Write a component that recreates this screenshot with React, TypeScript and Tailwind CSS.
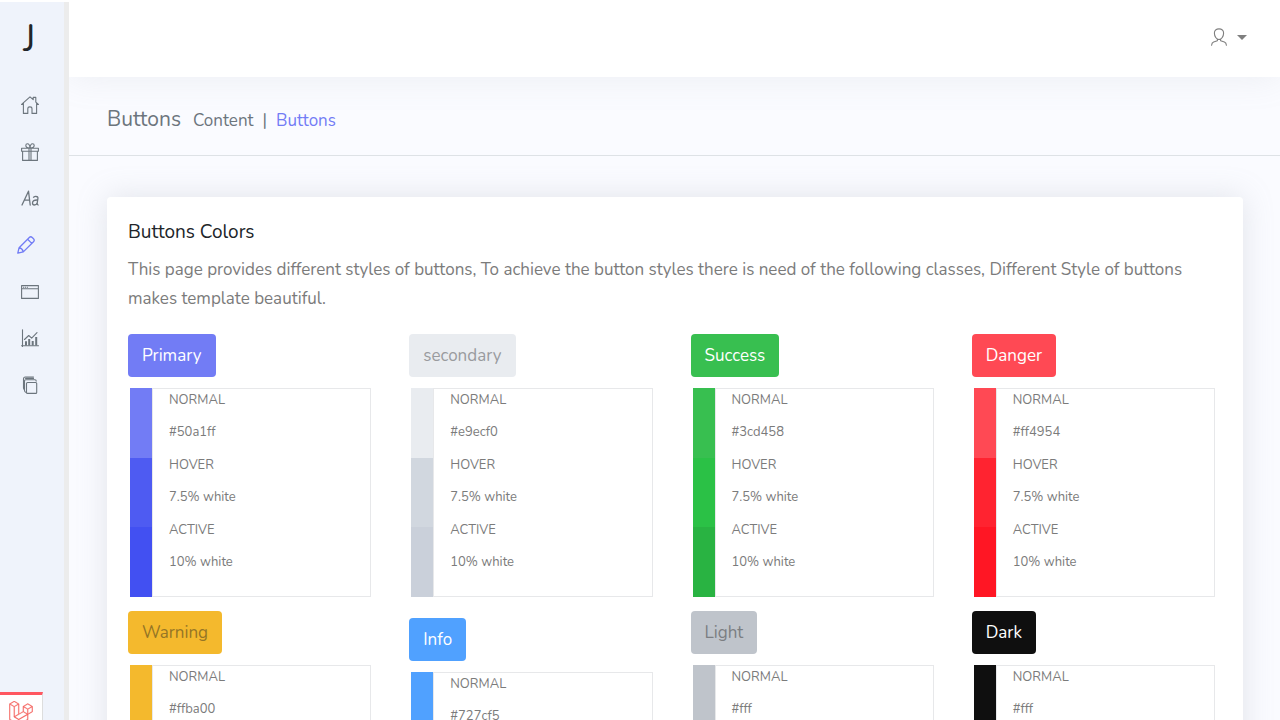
import type { ReactNode } from 'react';
import { SiLaravel } from 'react-icons/si';

type Swatch = {
  label: string;
  code: string;
  button: string;
  tones: [string, string, string];
  column?: string;
};

const swatches: Swatch[] = [
  { label: 'Primary', code: '#50a1ff', button: 'bg-[#727cf5] text-white', tones: ['bg-[#727cf5]', 'bg-[#4e5bf2]', 'bg-[#4250f2]'] },
  { label: 'secondary', code: '#e9ecf0', button: 'bg-[#e9ecf0] text-[#999b9e]', tones: ['bg-[#e9ecf0]', 'bg-[#d1d7df]', 'bg-[#cad0da]'] },
  { label: 'Success', code: '#3cd458', button: 'bg-[#38bf50] text-white', tones: ['bg-[#38bf50]', 'bg-[#2bc146]', 'bg-[#29b342]'] },
  { label: 'Danger', code: '#ff4954', button: 'bg-[#ff4954] text-white', tones: ['bg-[#ff4954]', 'bg-[#ff2330]', 'bg-[#ff1624]'] },
  { label: 'Warning', code: '#ffba00', button: 'bg-[#f4b92d] text-[#957526]', tones: ['bg-[#f4b92d]', 'bg-[#eaa90e]', 'bg-[#dea00d]'] },
  { label: 'Info', code: '#727cf5', button: 'bg-[#50a1ff] text-white', tones: ['bg-[#50a1ff]', 'bg-[#2a8cff]', 'bg-[#1d85ff]'], column: 'pt-[7px]' },
  { label: 'Light', code: '#fff', button: 'bg-[#bfc4cb] text-[#7b7e82]', tones: ['bg-[#bfc4cb]', 'bg-[#aab0b9]', 'bg-[#a3aab4]'] },
  { label: 'Dark', code: '#fff', button: 'bg-[#0f0f0f] text-white', tones: ['bg-[#0f0f0f]', 'bg-[#050505]', 'bg-black'] },
];

function Icon({ children }: { children: ReactNode }) {
  return (
    <svg viewBox="0 0 18 18" className="size-[18px]" fill="none" stroke="currentColor" strokeWidth="1.1" strokeLinecap="round" strokeLinejoin="round" aria-hidden="true">
      {children}
    </svg>
  );
}

const navItems: { name: string; active?: boolean; icon: ReactNode }[] = [
  {
    name: 'Home',
    icon: <path d="M.6 8.400 9 .8l3.200 2.900V1.400h2.600v4.700l2.600 2.300M2.400 7v10.400h4.400v-4.600c0-1.200.9-1.900 2.100-1.900s2.100.7 2.100 1.900v4.600h4.600V7M.6 8.400h1.800M15.600 8.400h1.800" />,
  },
  {
    name: 'Gifts',
    icon: <path d="M.6 5.300h16.800v3H.6zM1.600 8.300v9.100h14.800V8.300M8 5.300v12.100M10 5.300v12.100M9 5.200C6.500 4.900 4.800 4 4.800 2.500 4.800 1.400 5.500.8 6.500.8 7.900.8 8.800 2.700 9 5.200 9.200 2.700 10.100.8 11.500.8c1 0 1.700.6 1.700 1.700 0 1.500-1.700 2.400-4.200 2.700" />,
  },
  {
    name: 'Typography',
    icon: <path strokeWidth="1.300" d="M1 16 7.500 2.200 9.200 16M3.600 11.200h5M12.500 8.200c1-.7 2-.9 2.900-.7 1.200.2 1.700 1 1.500 2.200L16.200 14c-.1 1.100.1 1.700.9 2M16.500 11c-3.200-.2-5 .9-5 3 0 1.300.7 2 1.800 2 1.400 0 2.500-.9 3-2.400" />,
  },
  {
    name: 'Buttons',
    active: true,
    icon: <path strokeWidth="1.300" d="m.8 17.200 1.300-5.500L12.300 1.500c.9-.9 2-.9 2.900 0l1.300 1.300c.9.900.9 2 0 2.900L6.300 15.900zM2.100 11.700c1.700.3 3.700 2.300 4.200 4.200M10.600 3.200l4.200 4.200" />,
  },
  {
    name: 'Windows',
    icon: <path d="M.6 2.600h16.800v12.800H.6zM.6 5.800h16.800M2.500 4.200h.2M4.400 4.200h.2M6.300 4.200h.2" />,
  },
  {
    name: 'Charts',
    icon: (
      <>
        <path d="M1.500.7v16.700M.5 16.800h17M3.500 10.500l4.200-4 3 2.700 5.300-5.500" />
        <path d="M5 16.500v-4.300M8.200 16.500V10M11.700 16.500v-4.500M15.200 16.500V8" strokeWidth="2" strokeLinecap="butt" />
      </>
    ),
  },
  {
    name: 'Pages',
    icon: (
      <>
        <path d="M6.500 6.500h8.200c.6 0 1 .4 1 1v8.900c0 .6-.4 1-1 1H6.500c-.6 0-1-.4-1-1V7.500c0-.6.4-1 1-1z" />
        <path d="M5.200 16.500c-.9-.3-1.700-.9-1.700-2.100V4.900c0-.7.5-1.100 1.200-1.100h9.300c.8 0 1.200.5 1.200 1.300M3.500 13.700c-.7-.4-1-.9-1-1.700V3c0-1.300.7-2 1.900-2h8.100M4.600 2.400h7.900" />
      </>
    ),
  },
];

function Sidebar() {
  return (
    <aside className="sticky top-0 z-10 h-screen w-[69px] shrink-0 border-t-2 border-white">
      <div className="flex h-full flex-col items-start border-r-[5px] border-[#ececec] bg-[#eff3fb]">
        <a href="#top" className="flex h-[74px] w-[59px] items-center justify-center text-[38px] leading-none text-[#212529]">J</a>
        <nav aria-label="Main" className="mt-5 flex h-[298px] w-[60px] flex-col items-center justify-between text-[#6c757d]">
          {navItems.map((item) => (
            <a key={item.name} href={`#${item.name.toLowerCase()}`} aria-label={item.name} className={item.active ? 'pr-2 text-[#727cf5]' : ''}>
              <Icon>{item.icon}</Icon>
            </a>
          ))}
        </nav>
      </div>
    </aside>
  );
}

function Header() {
  return (
    <header className="relative flex h-[77px] items-center justify-end bg-white pr-[33px] pb-[3px] shadow-[0_0_35px_0_rgba(154,161,171,0.15)]">
      <button type="button" aria-label="Account" className="flex items-center gap-[9px] text-[#7f7f7f]">
        <Icon>
          <path d="M9 .9c2.700 0 4.600 1.500 4.600 4.200 0 3.200-2 6.400-4.600 6.400S4.400 8.300 4.400 5.100C4.400 2.400 6.300.9 9 .9zM7.400 11.300v1.500L3.600 14c-1.300.5-1.900 1.700-2 3.300M10.600 11.300v1.500l3.800 1.200c1.300.5 1.900 1.700 2 3.300" />
        </Icon>
        <svg viewBox="0 0 10 5" className="h-[5px] w-2.5" fill="currentColor" aria-hidden="true">
          <path d="M0 0h10L5 5z" />
        </svg>
      </button>
    </header>
  );
}

function SwatchCard({ label, code, button, tones, column = '' }: Swatch) {
  const lines = ['NORMAL', code, 'HOVER', '7.5% white', 'ACTIVE', '10% white'];
  return (
    <div className={column}>
      <button type="button" className={`block h-[43px] rounded-[4px] px-3.5 text-[17px] ${button}`}>{label}</button>
      <div className="mt-[11px] ml-0.5 flex h-[209px]">
        <div className="flex w-[22px] flex-col">
          {tones.map((tone) => (
            <div key={tone} className={`flex-1 ${tone}`} />
          ))}
        </div>
        <div className="flex flex-1 flex-col justify-between border border-[#e7e8ea] pb-[23px] pl-4 text-[13px] leading-[22px]">
          {lines.map((line) => (
            <p key={line}>{line}</p>
          ))}
        </div>
      </div>
    </div>
  );
}

export default function App() {
  return (
    <div id="top" className="flex min-h-screen bg-[#fafbff] font-['Nunito','Lato',sans-serif] text-[#7b7b7b]">
      <Sidebar />
      <div className="min-w-0 flex-1">
        <Header />
        <div className="flex h-[79px] items-baseline border-b border-[#dee2e6] px-[38px] pt-6">
          <h1 className="text-[21px] leading-[36px] text-[#6c757d]">Buttons</h1>
          <nav aria-label="Breadcrumb" className="ml-3 flex gap-[9px] text-[17px] text-[#6c757d]">
            <a href="#content">Content</a>
            <span>|</span>
            <a href="#buttons" className="text-[#727cf5]">Buttons</a>
          </nav>
        </div>
        <main className="pt-[41px] pr-[37px] pb-10 pl-[38px]">
          <section className="rounded-[4px] bg-white pt-5 pr-7 pb-8 pl-[21px] shadow-[0_0_30px_0_rgba(154,161,171,0.25)]">
            <h2 className="text-[19px] leading-[30px] text-[#212529]">Buttons Colors</h2>
            <p className="mt-2 text-[17px] leading-[29px]">
              This page provides different styles of buttons, To achieve the button styles there is need of the following classes, Different Style of buttons makes template beautiful.
            </p>
            <div className="mt-[21px] grid grid-cols-4 gap-x-[38px] gap-y-3.5">
              {swatches.map((swatch) => (
                <SwatchCard key={swatch.label} {...swatch} />
              ))}
            </div>
          </section>
        </main>
      </div>
      <button type="button" aria-label="Open debug bar" className="fixed bottom-0 left-0 z-20 flex h-7 w-[43px] items-start border-t-[3px] border-r border-t-[#ff5760] border-r-[#ddd] bg-white pt-1.5 pl-[9px] text-[#f4645f]">
        <SiLaravel className="size-6 shrink-0" stroke="currentColor" strokeWidth="0.3" />
      </button>
    </div>
  );
}
